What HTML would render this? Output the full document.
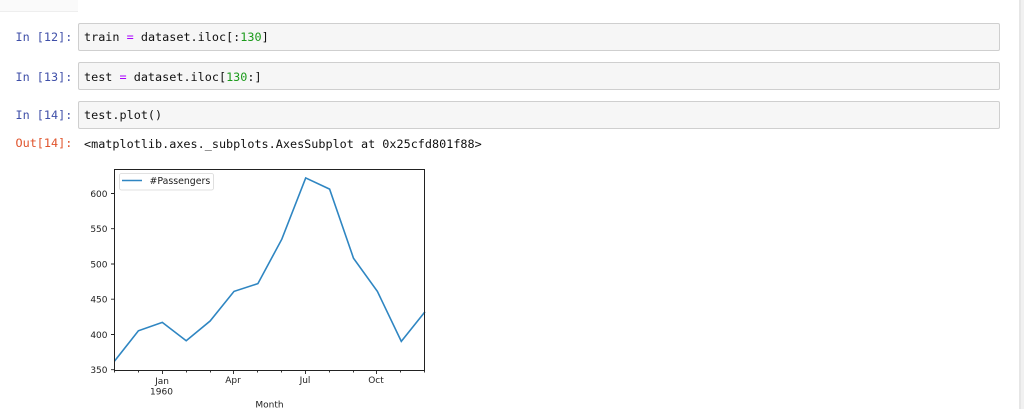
<!DOCTYPE html>
<html><head><meta charset="utf-8"><style>
html,body{margin:0;padding:0;background:#fff}
body{width:1024px;height:409px;position:relative;overflow:hidden}
#w{position:absolute;left:0;top:0;width:1024px;height:409px;filter:blur(.35px);font-family:"DejaVu Sans Mono","Liberation Mono",monospace;font-size:11.8px;color:#111}
.a{position:absolute;white-space:pre;line-height:14px}
.cell{position:absolute;left:78px;width:920px;height:26px;background:#f6f6f6;border:1px solid #cfcfcf;border-radius:2px}
.in{color:#3f4fa8;left:15.5px}
.out{color:#e0532b;left:15.5px}
.o{color:#a0f}.n{color:#1a9a1a}
</style></head><body><div id="w">
<div style="position:absolute;left:0;top:0;width:78px;height:11px;background:#fafafa;border-bottom:1px solid #eee"></div>
<div style="position:absolute;left:1019px;top:0;width:2px;height:409px;background:#e6e6e6"></div>
<div style="position:absolute;left:1021px;top:0;width:3px;height:409px;background:#f1f1f1"></div>
<div class="cell" style="top:23px"></div>
<div class="cell" style="top:62px"></div>
<div class="cell" style="top:101px"></div>
<div class="a in" style="top:30px">In [12]:</div>
<div class="a" style="left:84px;top:30px">train <span class="o">=</span> dataset.iloc[:<span class="n">130</span>]</div>
<div class="a in" style="top:70px">In [13]:</div>
<div class="a" style="left:84px;top:69.5px">test <span class="o">=</span> dataset.iloc[<span class="n">130</span>:]</div>
<div class="a in" style="top:108px">In [14]:</div>
<div class="a" style="left:84px;top:108px">test.plot()</div>
<div class="a out" style="top:136px">Out[14]:</div>
<div class="a" style="left:84px;top:137px">&lt;matplotlib.axes._subplots.AxesSubplot at 0x25cfd801f88&gt;</div>
<svg width="1024" height="409" style="position:absolute;left:0;top:0" font-family="'DejaVu Sans',sans-serif" font-size="9" fill="#222">
<polyline fill="none" stroke="#2f86c2" stroke-width="1.6" points="114.5,361.1 138.4,330.8 162.3,322.4 186.2,340.7 210.1,321 234,291.4 257.9,283.6 281.8,239.2 305.7,177.9 329.6,189.1 353.5,258.2 377.4,291.4 401.3,341.4 425,311.8"/>
<rect x="114.5" y="169.5" width="310" height="201" fill="none" stroke="#222" stroke-width="1"/>
<g stroke="#222" stroke-width="0.9">
<path d="M111 193.5H114.5M111 228.7H114.5M111 264H114.5M111 299.2H114.5M111 334.5H114.5M111 369.7H114.5"/>
<path d="M162.5 370.5v3.5M233.5 370.5v3.5M305.5 370.5v3.5M376.5 370.5v3.5"/>
<path d="M114.5 370.5v2M138.5 370.5v2M186.5 370.5v2M210.5 370.5v2M257.5 370.5v2M281.5 370.5v2M329.5 370.5v2M353.5 370.5v2M400.5 370.5v2M424.5 370.5v2"/>
</g>
<g text-anchor="end">
<text x="107.5" y="197">600</text><text x="107.5" y="232">550</text><text x="107.5" y="267.3">500</text><text x="107.5" y="302.5">450</text><text x="107.5" y="337.8">400</text><text x="107.5" y="373">350</text>
</g>
<g text-anchor="middle">
<text x="162" y="384">Jan</text><text x="161.5" y="394.5">1960</text><text x="233" y="383">Apr</text><text x="305" y="383">Jul</text><text x="376" y="383">Oct</text><text x="269.5" y="407.5">Month</text>
</g>
<rect x="119.5" y="173.5" width="94" height="16.5" rx="2" fill="#fff" stroke="#d8d8d8" stroke-width="0.8"/>
<line x1="122" y1="180.5" x2="142" y2="180.5" stroke="#2f86c2" stroke-width="1.6"/>
<text x="149.5" y="184" font-size="9.4">#Passengers</text>
</svg>
</div></body></html>
